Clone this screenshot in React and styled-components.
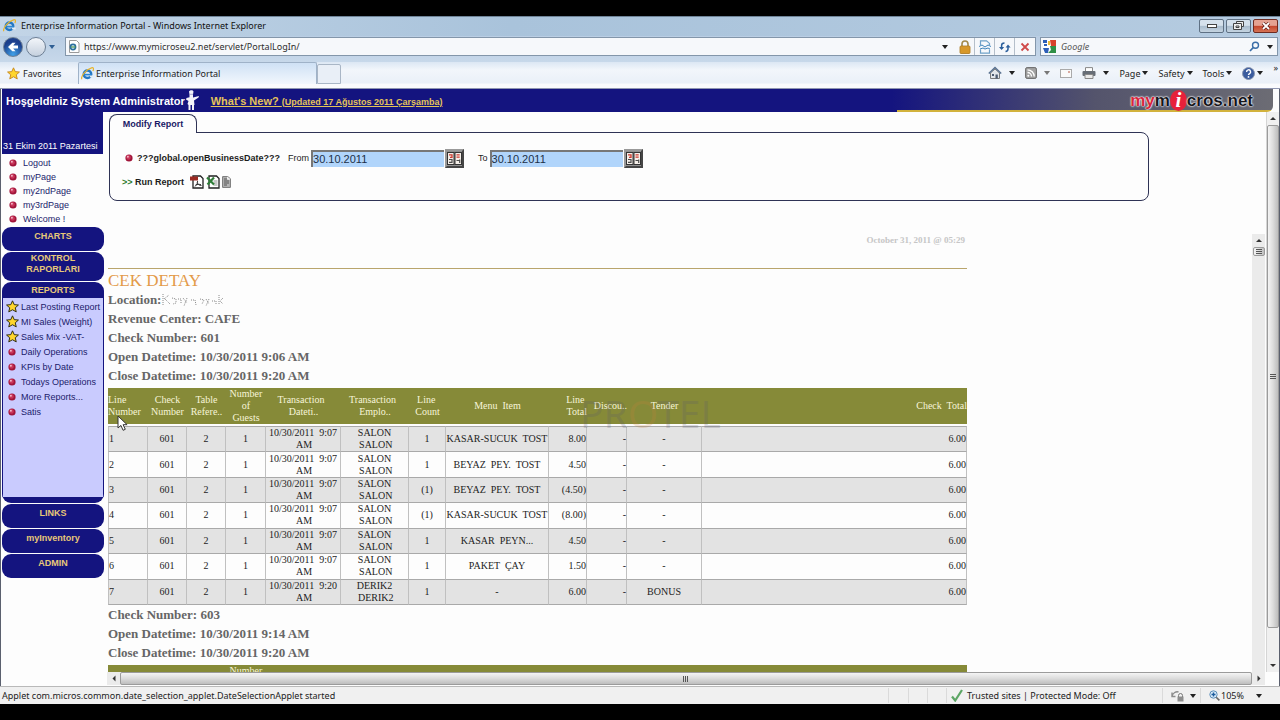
import React from 'react'
import styled, { createGlobalStyle, css } from 'styled-components'

const GlobalStyle = createGlobalStyle`
    *, *::before, *::after {
        box-sizing: border-box;
    }

    body {
        margin: 0;
        background: #000;
        font-family: "Noto Sans", "Open Sans", sans-serif;
        font-size: 9px;
        color: #1c1c1c;
    }

    button {
        padding: 0;
        border: 0;
        background: none;
        font: inherit;
        color: inherit;
    }

    a {
        color: inherit;
        text-decoration: none;
    }

    svg {
        display: block;
        flex: none;
    }
`;

const myPages = ['Logout', 'myPage', 'my2ndPage', 'my3rdPage', 'Welcome !']

const reports = [
    { name: 'Last Posting Report', starred: true },
    { name: 'MI Sales (Weight)', starred: true },
    { name: 'Sales Mix -VAT-', starred: true },
    { name: 'Daily Operations' },
    { name: 'KPIs by Date' },
    { name: 'Todays Operations' },
    { name: 'More Reports...' },
    { name: 'Satis' },
]

const columns = [
    { title: 'Line\nNumber', width: 40, align: 'left' },
    { title: 'Check\nNumber', width: 39 },
    { title: 'Table\nRefere..', width: 39 },
    { title: 'Number\nof\nGuests', width: 40 },
    { title: 'Transaction  \nDateti..', width: 75 },
    { title: 'Transaction  \nEmplo..', width: 68 },
    { title: 'Line \nCount', width: 37 },
    { title: 'Menu  Item', width: 103 },
    { title: 'Line \nTotal', width: 38, align: 'right' },
    { title: 'Discou..', width: 40, align: 'right' },
    { title: 'Tender', width: 75 },
    { title: 'Check  Total', width: 265, align: 'right' },
]

const rows = [
    ['1', '601', '2', '1', '10/30/2011  9:07\n AM', 'SALON\n SALON', '1', 'KASAR-SUCUK  TOST', '8.00', '-', '-', '6.00'],
    ['2', '601', '2', '1', '10/30/2011  9:07\n AM', 'SALON\n SALON', '1', 'BEYAZ  PEY.  TOST', '4.50', '-', '-', '6.00'],
    ['3', '601', '2', '1', '10/30/2011  9:07\n AM', 'SALON\n SALON', '(1)', 'BEYAZ  PEY.  TOST', '(4.50)', '-', '-', '6.00'],
    ['4', '601', '2', '1', '10/30/2011  9:07\n AM', 'SALON\n SALON', '(1)', 'KASAR-SUCUK  TOST', '(8.00)', '-', '-', '6.00'],
    ['5', '601', '2', '1', '10/30/2011  9:07\n AM', 'SALON\n SALON', '1', 'KASAR  PEYN...', '4.50', '-', '-', '6.00'],
    ['6', '601', '2', '1', '10/30/2011  9:07\n AM', 'SALON\n SALON', '1', 'PAKET  ÇAY', '1.50', '-', '-', '6.00'],
    ['7', '601', '2', '1', '10/30/2011  9:20\n AM', 'DERIK2\n DERIK2', '1', '-', '6.00', '-', 'BONUS', '6.00'],
]


/* ---------- icons ---------- */

const IeIcon = ({ size = 13 }) => (
    <svg width={size} height={size} viewBox="0 0 16 16" aria-hidden="true">
        <circle cx="8" cy="9" r="4.6" fill="none" stroke="#2277c4" strokeWidth="3" />
        <path d="M4 9.4h9" stroke="#2a86d4" strokeWidth="2" />
        <path d="M10.5 10.6h5v2.2h-4z" fill="#e3edf6" />
        <path d="M1 15C-.6 11.500 6 3 13 1c2.600-.6 3 1.200 1.600 4" fill="none" stroke="#e7b52e" strokeWidth="1.500" />
    </svg>
)

const Star = ({ size = 13, outline = '#2b2b10' }) => (
    <svg width={size} height={size} viewBox="0 0 16 16" aria-hidden="true">
        <path d="M8 1l2.100 4.700 5.200.5-3.900 3.400 1.200 5L8 12l-4.600 2.600 1.200-5L.7 6.200l5.200-.5z" fill="#ffd62e" stroke={outline} strokeWidth="1.200" strokeLinejoin="round" />
    </svg>
)

const Bullet = () => (
    <svg width="8" height="8" viewBox="0 0 8 8" aria-hidden="true">
        <circle cx="4" cy="4" r="3.600" fill="#a0153a" />
        <circle cx="3.500" cy="3.400" r="2.300" fill="#c9365a" />
        <circle cx="2.900" cy="2.700" r="1" fill="#f2b4c4" />
    </svg>
)

const BackArrow = () => (
    <svg width="14" height="14" viewBox="0 0 14 14" aria-hidden="true">
        <path d="M12 5.500v3H7.200l2.300 2.700H6.300L2 7l4.300-4.200h3.200L7.200 5.500z" fill="#fff" />
    </svg>
)

const PageIcon = () => (
    <svg width="12" height="13" viewBox="0 0 12 13" aria-hidden="true">
        <path d="M1.500.5h7l2.500 2.500v9.500h-9.500z" fill="#fff" stroke="#9a9a9a" />
        <circle cx="5" cy="7" r="2.600" fill="none" stroke="#2b6f9e" strokeWidth="1.600" />
        <path d="M3 7h4.600" stroke="#3a8a4a" strokeWidth="1.200" />
    </svg>
)

const LockIcon = () => (
    <svg width="12" height="14" viewBox="0 0 12 14" aria-hidden="true">
        <path d="M3 7V4a3 3 0 0 1 6 0v3" fill="none" stroke="#a38a4c" strokeWidth="1.600" />
        <rect x="1" y="6" width="10" height="7.500" rx="1" fill="#e0a030" stroke="#a8741a" strokeWidth=".8" />
        <path d="M2 8h8M2 10h8M2 12h8" stroke="#c58820" strokeWidth=".6" />
    </svg>
)

const CompatIcon = () => (
    <svg width="12" height="14" viewBox="0 0 12 14" aria-hidden="true">
        <path d="M1.500 5V.8h6l3 2.600V5M1.500 9.500v3.700h9V9.500" fill="none" stroke="#6ea0c8" strokeWidth="1.200" />
        <path d="M0 6.500l3-1.500 3 2 3-2 3 1.500M1 9l3-1 2 1 3-1 2 1" fill="none" stroke="#3d83bb" />
    </svg>
)

const RefreshIcon = () => (
    <svg width="12" height="12" viewBox="0 0 12 12" aria-hidden="true">
        <path d="M2.600 8V4.500C2.600 3 4 2 5.500 2" fill="none" stroke="#2c5f9c" strokeWidth="1.500" />
        <path d="M0 6h5.200L2.600 9zM6.600 6.500h5L9 3.500z" fill="#2c5f9c" />
        <path d="M9 5v3c0 1.500-1 2.300-2.500 2.500" fill="none" stroke="#2c5f9c" strokeWidth="1.500" />
    </svg>
)

const StopIcon = () => (
    <svg width="10" height="10" viewBox="0 0 10 10" aria-hidden="true">
        <path d="M1.500 1.500l7 7M8.500 1.500l-7 7" stroke="#cf4a4a" strokeWidth="1.800" />
    </svg>
)

const GoogleIcon = () => (
    <svg width="13" height="13" viewBox="0 0 13 13" aria-hidden="true">
        <path d="M0 0h13v13H0z" fill="#fff" />
        <path d="M0 0h4v3H0zM1 4h3v2H1z" fill="#2d5fb8" />
        <path d="M7 0h6v6H8z" fill="#d8402c" />
        <path d="M7 6h6v7H5l3-3z" fill="#2f8f46" />
        <path d="M0 8h6l-1 5H2z" fill="#2d5fb8" />
        <path d="M5 1h2v4H5z" fill="#e8b93a" />
    </svg>
)

const SearchIcon = () => (
    <svg width="11" height="11" viewBox="0 0 11 11" aria-hidden="true">
        <circle cx="6.500" cy="4.200" r="3" fill="none" stroke="#3a6ea8" strokeWidth="1.400" />
        <path d="M4.300 6.500L1 10" stroke="#3a6ea8" strokeWidth="1.800" />
    </svg>
)

const HomeIcon = () => (
    <svg width="14" height="14" viewBox="0 0 14 14" aria-hidden="true">
        <path d="M2.500 7v5.500h9V7L7 3z" fill="#e2e6ea" stroke="#7b7b7b" />
        <path d="M.8 7.500L7 1.500l6.200 6" fill="none" stroke="#5a7290" strokeWidth="1.600" />
        <path d="M4 8h2v2H4zM7.500 8.500h2.300v4H7.500z" fill="#4c5a70" />
    </svg>
)

const FeedIcon = () => (
    <svg width="12" height="12" viewBox="0 0 12 12" aria-hidden="true">
        <rect x=".6" y=".6" width="10.800" height="10.800" rx="1.500" fill="#a2a2a2" stroke="#6a6a6a" />
        <path d="M2.500 5.500a4 4 0 0 1 4 4M2.500 2.800a6.700 6.700 0 0 1 6.700 6.700" fill="none" stroke="#fff" strokeWidth="1.300" />
        <circle cx="3.300" cy="8.800" r="1" fill="#fff" />
    </svg>
)

const MailIcon = () => (
    <svg width="12" height="9" viewBox="0 0 12 9" aria-hidden="true">
        <rect x=".5" y=".5" width="11" height="8" fill="#fafafa" stroke="#aaa" />
        <path d="M8 2h2v2H8z" fill="#d9a9a0" />
    </svg>
)

const PrintIcon = () => (
    <svg width="14" height="12" viewBox="0 0 14 12" aria-hidden="true">
        <path d="M3.500 4V.6h7V4" fill="#fff" stroke="#888" />
        <rect x=".5" y="4" width="13" height="5" rx="1" fill="#666d76" />
        <path d="M3 7.500h8v4H3z" fill="#e9e9e9" stroke="#888" />
    </svg>
)

const HelpIcon = () => (
    <svg width="13" height="13" viewBox="0 0 13 13" aria-hidden="true">
        <circle cx="6.500" cy="6.500" r="6" fill="#3b5c9e" stroke="#8a97b0" />
        <path d="M4.600 5a2 2 0 1 1 2.900 1.600c-.7.400-1 .7-1 1.400" fill="none" stroke="#fff" strokeWidth="1.400" />
        <circle cx="6.500" cy="9.900" r=".9" fill="#fff" />
    </svg>
)

const ChefIcon = () => (
    <svg width="15" height="21" viewBox="0 0 15 21" aria-hidden="true">
        <path d="M4 1.500C5-.3 8-.3 8.500 1.500L8 4.500v3L14 6l-.5 1.500L9 10.500l.5 4.500H9v5H7v-5H5.500v5h-2v-5l-1-1 1-3L1 9.500 1.500 8l3-.8V4.500z" fill="#f4f4fa" />
        <path d="M4.500 4.300h3.600" stroke="#8a8ab8" strokeWidth=".7" />
    </svg>
)

const CalendarIcon = () => (
    <svg width="15" height="13" viewBox="0 0 15 13" aria-hidden="true">
        <rect x=".5" y=".5" width="6.500" height="12" fill="#f5efe9" stroke="#333" />
        <rect x="8" y=".5" width="6.500" height="12" fill="#f5efe9" stroke="#333" />
        <path d="M2 2.800h3v2.500H3M9.500 2.800h3.200M9.500 5.200h3.200" fill="none" stroke="#cc3a2f" strokeWidth="1.300" />
        <path d="M2 7.500h3v2.800H2M12.700 7.500v3.500M9.500 8.500h3" fill="none" stroke="#4c4c4c" strokeWidth="1.200" />
    </svg>
)

const PdfIcon = () => (
    <svg width="14" height="14" viewBox="0 0 14 14" aria-hidden="true">
        <path d="M3 1h7.500L13 3.500V13H3z" fill="#fff" stroke="#222" strokeWidth="1.300" />
        <path d="M0 1.500h8v4H0z" fill="#9c2a22" />
        <path d="M5 11.500c2-2 3-4 2.500-5.500M7 7.500c1 2 2.500 3 4.500 3M5.500 10c2-.8 4-.8 5.500-.3" fill="none" stroke="#333" />
    </svg>
)

const ExcelIcon = () => (
    <svg width="14" height="14" viewBox="0 0 14 14" aria-hidden="true">
        <path d="M3 1h7.500L13 3.500V13H3z" fill="#fff" stroke="#222" strokeWidth="1.300" />
        <path d="M7.500 6h4M8 8h3.500M7.500 10h4" stroke="#777" strokeWidth=".8" />
        <path d="M1 2.500l7 7M8 2.500l-6.500 7" stroke="#2f7d38" strokeWidth="2.200" />
    </svg>
)

const TextFileIcon = () => (
    <svg width="9" height="12" viewBox="0 0 9 12" aria-hidden="true">
        <path d="M.6.6h5.500l2.300 2.300v8.500H.6z" fill="#b4b4b4" stroke="#777" />
        <path d="M2 3h3M2 5h5M2 7h5M2 9h3" stroke="#555" />
        <path d="M5.500.8v2.400H8" fill="#eee" stroke="#eee" />
    </svg>
)

const CheckIcon = () => (
    <svg width="12" height="13" viewBox="0 0 12 13" aria-hidden="true">
        <path d="M1 7.500l3.200 4L11 1" fill="none" stroke="#5ca564" strokeWidth="2.200" />
    </svg>
)

const PrivacyIcon = () => (
    <svg width="13" height="12" viewBox="0 0 13 12" aria-hidden="true">
        <path d="M1 6c1-3 4-5 6.500-4M1 2.500V6.500h3.500" fill="none" stroke="#8c8c8c" strokeWidth="1.400" />
        <path d="M7.500 7V5.500a2 2 0 0 1 4 0V7" fill="none" stroke="#777" />
        <rect x="6.500" y="6.500" width="6" height="5" fill="#8d8d8d" />
    </svg>
)

const ZoomIcon = () => (
    <svg width="11" height="11" viewBox="0 0 11 11" aria-hidden="true">
        <circle cx="4.500" cy="4.500" r="3.700" fill="#d9ebfa" stroke="#5b8db8" />
        <path d="M4.500 2.500v4M2.500 4.500h4" stroke="#1d5c9c" strokeWidth="1.400" />
        <path d="M7.200 7.200l3.200 3.200" stroke="#666" strokeWidth="1.600" />
    </svg>
)

const Cursor = () => (
    <svg width="12" height="17" viewBox="0 0 12 17" aria-hidden="true">
        <path d="M1 1v12l2.900-2.600 2.200 4.900 2.200-1-2.200-4.600h4z" fill="#fff" stroke="#333" />
    </svg>
)

const MaskedName = () => (
    <svg width="64" height="14" viewBox="0 0 64 14" aria-hidden="true">
        <path d="M2 1v12M3 6l5-4M4 6l5 5M11 5l4 1v4l-3 1M17 6h3v5M22 5l4 5M26 5l-3 8M30 7h4l1 5M39 6l4 1-2 4M45 6l3 5M48 6l-3 7M51 8h4v3M58 2v9M62 5l-3 3 3 3" fill="none" stroke="#888" strokeDasharray="1 1" />
    </svg>
)


/* ---------- browser window ---------- */

const Window = styled.div`
    display: flex;
    flex-direction: column;
    height: 100vh;
    padding: 16px 0;
    overflow: hidden;
`;

const TitleBar = styled.header`
    display: flex;
    align-items: center;
    gap: 5px;
    height: 20px;
    flex: none;
    padding: 0 2px 2px 3px;
    background: linear-gradient(90deg, #c3d5e7, #a9c3db 40%, #b5cbe0);
    border-top: 1px solid #6f8498;
`;

const Title = styled.h1`
    flex: 1;
    margin: 0;
    font-size: 9px;
    font-weight: 400;
    color: #111;
`;

const WindowButtons = styled.div`
    display: flex;
    gap: 2px;
`;

const WindowButton = styled.button`
    display: grid;
    place-items: center;
    width: 25px;
    height: 14px;
    border: 1px solid #5f7184;
    border-radius: 2px;
    background: linear-gradient(#d5e1ec 45%, #a9bccd 50%, #c5d4e1);

    ${({ $close }) => $close && css`
        border-color: #6e2a20;
        background: linear-gradient(#e5a292 45%, #c4452c 50%, #d67355);
    `}
`;

const AddressRow = styled.div`
    display: flex;
    align-items: flex-start;
    height: 26px;
    flex: none;
    padding: 1px 2px 0 3px;
    background: linear-gradient(#b9cde3, #c7d8ea);
`;

const NavButtons = styled.div`
    display: flex;
    align-items: center;
    gap: 3px;
    width: 62px;
    height: 20px;
`;

const RoundButton = styled.button`
    display: grid;
    place-items: center;
    width: 20px;
    height: 20px;
    border: 1px solid #6d7f94;
    border-radius: 50%;
    background: ${({ $active }) => $active
        ? 'radial-gradient(circle at 50% 90%, #3fa0e8, #1c3f8c 65%)'
        : 'linear-gradient(#f3f6fa, #c5d0de)'};
`;

const Arrow = styled.span`
    width: 0;
    height: 0;
    flex: none;
    border: 3px solid transparent;
    border-bottom-width: 0;
    border-top: 4px solid ${({ $color }) => $color || '#222'};
`;

const Field = styled.div`
    display: flex;
    align-items: center;
    height: 19px;
    border: 1px solid #8396aa;
    background: #f6f8fb;
`;

const AddressField = styled(Field)`
    flex: 1;
    gap: 4px;
    padding-left: 2px;
`;

const SearchField = styled(Field)`
    width: 238px;
    gap: 5px;
    margin-left: 4px;
    padding: 0 4px 0 2px;
`;

const FieldInput = styled.input`
    flex: 1;
    min-width: 0;
    padding: 0;
    border: 0;
    outline: 0;
    background: none;
    font: inherit;
    font-style: ${({ $hint }) => $hint ? 'italic' : 'normal'};
    color: #2e2e2e;

    &::placeholder {
        color: #555;
        opacity: 1;
    }
`;

const FieldButtons = styled.div`
    display: flex;
    align-self: stretch;

    button {
        display: grid;
        place-items: center;
        width: 20px;
        border-right: 1px solid #b5bfca;
    }

    button:first-child {
        border-right: 0;
    }

    button:last-child {
        border-right: 0;
    }
`;

const CommandRow = styled.div`
    display: flex;
    align-items: flex-end;
    height: 27px;
    flex: none;
    padding: 0 2px 4px 7px;
    background: linear-gradient(#dce7f4, #f2f6fb 30%, #eaf0f8 80%, #fafbfd 86%);
    border-bottom: 1px solid #8f96b0;
`;

const Favorites = styled.button`
    display: flex;
    align-items: center;
    gap: 3px;
    width: 71px;
    height: 21px;
`;

const Tab = styled.button`
    display: flex;
    align-items: center;
    gap: 2px;
    width: 239px;
    height: 22px;
    padding: 0 2px;
    border: 1px solid #9fb2c8;
    border-bottom: 0;
    border-radius: 2px 2px 0 0;
    background: linear-gradient(#cfe1f5, #f2f7fd);
`;

const NewTab = styled.button`
    width: 24px;
    height: 20px;
    border: 1px solid #a9b6c6;
    border-radius: 2px 2px 0 0;
    background: #e9eff7;
`;

const Commands = styled.nav`
    display: flex;
    flex: 1;
    justify-content: flex-end;
    align-items: center;
    gap: 10px;
    height: 22px;
`;

const Command = styled.button`
    display: flex;
    align-items: center;
    gap: ${({ $wide }) => $wide ? 7 : 2}px;
`;

const More = styled.button`
    align-self: flex-start;
    line-height: 12px;
`;


/* ---------- portal ---------- */

const Portal = styled.div`
    display: flex;
    flex-direction: column;
    flex: 1;
    min-height: 0;
    border: solid #5b606e;
    border-width: 0 1px;
    background: #fdfdfd;
    font-family: "Liberation Sans", Arial, sans-serif;
`;

const Banner = styled.div`
    display: flex;
    align-items: center;
    height: 23px;
    flex: none;
    margin: 0 6px 0 1px;
    padding: 0 20px 0 4px;
    border-bottom-right-radius: 6px;
    background:
        linear-gradient(#d2b23c, #d2b23c) right bottom / 376px 2px no-repeat,
        linear-gradient(90deg, #14147f 0, #14147f 70%, #54546c 86%, #6c6c74);
    color: #fff;
`;

const Greeting = styled.strong`
    font-size: 11px;
`;

const WhatsNew = styled.a`
    flex: 1;
    margin-left: 11px;
    font-size: 11px;
    font-weight: 700;
    color: #e5c35a;
    text-decoration: underline;

    small {
        font-size: 9px;
    }
`;

const Logo = styled.div`
    display: flex;
    align-items: center;
    font-size: 17px;
    line-height: 22px;
    font-weight: 700;
    color: #16161c;
    text-shadow: 0 0 2px #fff, 0 0 2px #fff, 0 0 1px #fff;

    em {
        font-style: normal;
        color: #d8263c;
    }

    i {
        width: 17px;
        height: 21px;
        flex: none;
        border-radius: 50%;
        background: radial-gradient(#e8203a 55%, #c03848);
        font-family: "Liberation Serif", serif;
        font-size: 21px;
        line-height: 20px;
        text-align: center;
        color: #fff;
        text-shadow: none;
    }
`;

const Body = styled.div`
    display: flex;
    flex: 1;
    min-height: 0;
`;

const Sidebar = styled.aside`
    width: 103px;
    flex: none;
    padding-left: 1px;
    font-size: 9px;
    color: #1b1b6b;
`;

const Today = styled.div`
    display: flex;
    align-items: flex-end;
    height: 42px;
    margin-right: 1px;
    padding: 0 0 1px 1px;
    background: #14147f;
    color: #fff;
    line-height: 14px;
    white-space: nowrap;
`;

const MenuList = styled.ul`
    margin: 0;
    padding: 2px 0 1px 7px;
    list-style: none;
`;

const ReportList = styled.ul`
    height: 199px;
    margin: 0;
    padding: 1px 0 0 3px;
    border-left: 1px solid #14147f;
    border-right: 1px solid #14147f;
    background: #c9cbfe;
    list-style: none;
`;

const MenuItem = styled.li`
    display: grid;
    grid-template-columns: 14px 1fr;
    align-items: center;
    height: 14px;
    white-space: nowrap;
`;

const ReportItem = styled(MenuItem)`
    grid-template-columns: 12px 1fr;
    justify-items: center;
    column-gap: 3px;
    height: 15px;

    a {
        justify-self: start;
    }
`;

const Section = styled.section`
    margin-bottom: 1px;
    border-radius: 9px;
    background: #14147f;
    overflow: hidden;
    padding-bottom: ${({ $open }) => $open ? 6 : 0}px;
`;

const sectionPadding = {
    closed: '4px 20px 9px',
    tall: '1px 20px 6px',
    open: '3px 20px 2px',
}

const SectionButton = styled.button`
    display: block;
    width: 100%;
    padding: ${({ $kind }) => sectionPadding[$kind || 'closed']};
    font-weight: 700;
    line-height: 11px;
    color: #e8c878;
`;

const Main = styled.main`
    display: flex;
    flex-direction: column;
    flex: 1;
    min-width: 0;
    padding: 2px 1px 0 5px;
`;

const ReportTab = styled.h2`
    width: 88px;
    height: 19px;
    flex: none;
    margin: 0 0 -1px;
    border: 1px solid #2f3355;
    border-bottom: 0;
    border-radius: 8px 8px 0 0;
    background: #fdfdfd;
    font-size: 9px;
    line-height: 18px;
    text-align: center;
    color: #1a1a66;
    z-index: 1;
`;

const Panel = styled.form`
    display: flex;
    flex-direction: column;
    gap: 4px;
    flex: none;
    margin-right: 116px;
    padding: 15px 12px 8px;
    border: 1px solid #2f3355;
    border-radius: 0 8px 8px 8px;
`;

const PanelRow = styled.div`
    display: flex;
    align-items: center;
    height: 20px;
`;

const Caption = styled.strong`
    margin: 0 8px 0 4px;
`;

const PanelBullet = styled.span`
    margin-left: 3px;
`;

const DateInput = styled.input`
    width: 133px;
    height: 17px;
    margin-left: 2px;
    padding: 0;
    border: solid #777;
    border-width: 2px 0 0 2px;
    border-radius: 0;
    background: #b1d5fb;
    font: 11px "Liberation Sans", Arial, sans-serif;
    color: #1c3048;
`;

const CalendarButton = styled.button`
    display: grid;
    place-items: center;
    width: 19px;
    height: 19px;
    margin: 0 14px 0 1px;
    border: 2px outset #999;
    background: #8f8f8f;
`;

const RunButton = styled.button`
    margin-right: 6px;
    font-weight: 700;

    span {
        color: #2c7a2c;
    }
`;

const ExportButton = styled.button`
    margin-right: 2px;
`;

const ReportFrame = styled.div`
    display: grid;
    grid-template-columns: 1fr 13px;
    grid-template-rows: 1fr 13px;
    flex: 1;
    min-height: 0;
    margin: 33px 0 1px -2px;
`;

const Report = styled.article`
    position: relative;
    padding-left: 1px;
    overflow: hidden;
    font-family: "Liberation Serif", "Times New Roman", serif;
`;

const Sheet = styled.div`
    width: 859px;
`;

const Printed = styled.p`
    margin: 0;
    padding: 0 2px 22px 0;
    border-bottom: 1px solid #b9a56c;
    font-size: 9px;
    font-weight: 700;
    line-height: 12px;
    text-align: right;
    color: #c6c6c6;
`;

const ReportTitle = styled.h2`
    margin: 2px 0 0;
    font-size: 17px;
    font-weight: 400;
    line-height: 19px;
    color: #e39a49;
`;

const Fact = styled.p`
    display: flex;
    align-items: center;
    margin: 0;
    font-size: 13px;
    font-weight: 700;
    line-height: 19px;
    color: #666;
`;

const Table = styled.table`
    width: 100%;
    height: ${({ $headOnly }) => $headOnly ? 38 : 217}px;
    margin-top: 3px;
    border-spacing: 0;
    table-layout: fixed;
    font-size: 10px;
    line-height: 12px;
`;

const Head = styled.th`
    width: ${({ $width }) => $width}px;
    height: 38px;
    padding: 0;
    border-bottom: 2px solid #fdfdfd;
    background: #868a38;
    font-weight: 400;
    text-align: ${({ $align }) => $align || 'center'};
    white-space: pre;
    color: #f7f5d8;
`;

const Cell = styled.td`
    padding: 0;
    border-top: 1px solid #a9a9a9;
    border-right: 1px solid #c0c0c0;
    text-align: ${({ $align }) => $align || 'center'};
    white-space: pre;

    &:first-child {
        border-left: 1px solid #c0c0c0;
    }
`;

const Row = styled.tr`
    &:nth-child(odd) {
        background: #e3e3e3;
    }

    &:last-child td {
        border-bottom: 1px solid #a9a9a9;
    }
`;

const Watermark = styled.div`
    position: absolute;
    left: 473px;
    top: 154px;
    font-family: "Noto Sans", sans-serif;
    font-size: 39px;
    line-height: 50px;
    color: rgba(90, 90, 110, .22);
    pointer-events: none;

    span {
        color: rgba(200, 130, 60, .22);
    }
`;

const Pointer = styled.div`
    position: absolute;
    left: 10px;
    top: 181px;
`;


/* ---------- scrollbars ---------- */

const VScroll = styled.div`
    display: flex;
    flex-direction: column;
    align-items: center;
    background: #ebebeb;
`;

const HScroll = styled.div`
    display: flex;
    align-items: center;
    grid-column: 1 / -1;
    background: #ebebeb;
`;

const PageScroll = styled(VScroll)`
    width: 13px;
    flex: none;
    margin-bottom: 14px;
    border-left: 1px solid #d5d5d5;
    background: #f0f0f0;
`;

const ScrollButton = styled.button`
    display: grid;
    place-items: center;
    width: 13px;
    height: 13px;
    flex: none;

    &::before {
        content: '';
        border: 3px solid transparent;
        border-bottom: 3px solid #333;
        border-top: 0;
        transform: rotate(${({ $turn }) => $turn || 0}deg);
    }
`;

const Thumb = styled.div`
    display: grid;
    place-items: center;
    border: 1px solid #9b9b9b;
    border-radius: 2px;
    background: linear-gradient(${({ $flat }) => $flat ? '180deg' : '90deg'}, #f4f4f4, #dcdcdc 50%, #bdbdbd);

    &::before {
        content: '';
        width: 6px;
        height: 6px;
        background: repeating-linear-gradient(${({ $flat }) => $flat ? '90deg' : '180deg'}, #555 0 1px, transparent 1px 2px);
    }
`;

const PageThumb = styled(Thumb)`
    align-self: stretch;
    flex: 1;
    margin-bottom: 31px;
`;

const SmallThumb = styled(Thumb)`
    width: 12px;
    height: 9px;
`;

const WideThumb = styled(Thumb)`
    flex: 1;
    height: 13px;
`;


/* ---------- status bar ---------- */

const StatusBar = styled.footer`
    display: flex;
    align-items: center;
    height: 18px;
    flex: none;
    padding-left: 2px;
    background: #f0f0f0;
    border-top: 1px solid #b9b9b9;
`;

const StatusText = styled.span`
    flex: 1;
`;

const StatusCell = styled.div`
    display: flex;
    align-items: center;
    gap: 4px;
    width: ${({ $width }) => $width}px;
    height: 15px;
    padding-left: 4px;
    border-left: 1px solid #dadada;
`;

const StatusButton = styled.button`
    display: flex;
    align-items: center;
    gap: ${({ $gap }) => $gap}px;
    height: 15px;
    padding: 0 ${({ $end }) => $end || 4}px 0 8px;
    border-left: 1px solid #dadada;
`;

const ZoomText = styled.span`
    margin-right: 11px;
`;


function TableHead() {
    return (
        <thead>
            <tr>
                {columns.map(col => (
                    <Head key={col.title} $width={col.width} $align={col.align}>{col.title}</Head>
                ))}
            </tr>
        </thead>
    )
}

function Browser() {
    return (
        <>
            <TitleBar>
                <IeIcon />
                <Title>Enterprise Information Portal - Windows Internet Explorer</Title>
                <WindowButtons>
                    <WindowButton aria-label="Minimize">
                        <svg width="10" height="6"><rect x=".5" y="1.500" width="9" height="3" fill="#fff" stroke="#444" /></svg>
                    </WindowButton>
                    <WindowButton aria-label="Restore">
                        <svg width="11" height="9"><path d="M3.500 2.500v-2h7v5h-2M.5 2.500h8v6h-8zM3 5h3v1.500H3z" fill="#eee" stroke="#444" /></svg>
                    </WindowButton>
                    <WindowButton aria-label="Close" $close>
                        <svg width="10" height="8"><path d="M2 1l6 6M8 1L2 7" stroke="#5a1a14" strokeWidth="3.200" /><path d="M2 1l6 6M8 1L2 7" stroke="#fff" strokeWidth="1.800" /></svg>
                    </WindowButton>
                </WindowButtons>
            </TitleBar>
            <AddressRow>
                <NavButtons>
                    <RoundButton aria-label="Back" $active><BackArrow /></RoundButton>
                    <RoundButton aria-label="Forward" />
                    <Command aria-label="Recent pages"><Arrow $color="#2f5f94" /></Command>
                </NavButtons>
                <AddressField>
                    <PageIcon />
                    <FieldInput aria-label="Address" defaultValue="https://www.mymicroseu2.net/servlet/PortalLogIn/" />
                    <FieldButtons>
                        <button aria-label="Show addresses"><Arrow /></button>
                        <button aria-label="Security report"><LockIcon /></button>
                        <button aria-label="Compatibility view"><CompatIcon /></button>
                        <button aria-label="Refresh"><RefreshIcon /></button>
                        <button aria-label="Stop"><StopIcon /></button>
                    </FieldButtons>
                </AddressField>
                <SearchField>
                    <GoogleIcon />
                    <FieldInput aria-label="Search" placeholder="Google" $hint />
                    <Command aria-label="Search" $wide><SearchIcon /><Arrow /></Command>
                </SearchField>
            </AddressRow>
            <CommandRow>
                <Favorites><Star outline="#c98a1c" />Favorites</Favorites>
                <Tab><IeIcon />Enterprise Information Portal</Tab>
                <NewTab aria-label="New tab" />
                <Commands>
                    <Command aria-label="Home" $wide><HomeIcon /><Arrow /></Command>
                    <Command aria-label="Feeds" $wide><FeedIcon /><Arrow $color="#777" /></Command>
                    <Command aria-label="Mail"><MailIcon /></Command>
                    <Command aria-label="Print" $wide><PrintIcon /><Arrow /></Command>
                    <Command>Page<Arrow /></Command>
                    <Command>Safety<Arrow /></Command>
                    <Command>Tools<Arrow /></Command>
                    <Command aria-label="Help"><HelpIcon /><Arrow /></Command>
                    <More aria-label="More commands">»</More>
                </Commands>
            </CommandRow>
        </>
    )
}

function SideMenu() {
    return (
        <Sidebar>
            <Today>31 Ekim 2011 Pazartesi</Today>
            <MenuList>
                {myPages.map(page => (
                    <MenuItem key={page}><Bullet /><a href="#page">{page}</a></MenuItem>
                ))}
            </MenuList>
            <Section><SectionButton>CHARTS</SectionButton></Section>
            <Section><SectionButton $kind="tall">KONTROL RAPORLARI</SectionButton></Section>
            <Section $open>
                <SectionButton $kind="open">REPORTS</SectionButton>
                <ReportList>
                    {reports.map(report => (
                        <ReportItem key={report.name}>
                            {report.starred ? <Star /> : <Bullet />}
                            <a href="#report">{report.name}</a>
                        </ReportItem>
                    ))}
                </ReportList>
            </Section>
            <Section><SectionButton>LINKS</SectionButton></Section>
            <Section><SectionButton>myInventory</SectionButton></Section>
            <Section><SectionButton>ADMIN</SectionButton></Section>
        </Sidebar>
    )
}

function ReportView() {
    return (
        <ReportFrame>
            <Report>
                <Sheet>
                    <Printed>October 31, 2011 @ 05:29</Printed>
                    <ReportTitle>CEK DETAY</ReportTitle>
                    <Fact>Location: <MaskedName /></Fact>
                    <Fact>Revenue Center: CAFE</Fact>
                    <Fact>Check Number: 601</Fact>
                    <Fact>Open Datetime: 10/30/2011 9:06 AM</Fact>
                    <Fact>Close Datetime: 10/30/2011 9:20 AM</Fact>
                    <Table>
                        <TableHead />
                        <tbody>
                            {rows.map(row => (
                                <Row key={row[0]}>
                                    {row.map((value, i) => (
                                        <Cell key={i} $align={columns[i].align}>{value}</Cell>
                                    ))}
                                </Row>
                            ))}
                        </tbody>
                    </Table>
                    <Fact>Check Number: 603</Fact>
                    <Fact>Open Datetime: 10/30/2011 9:14 AM</Fact>
                    <Fact>Close Datetime: 10/30/2011 9:20 AM</Fact>
                    <Table $headOnly>
                        <TableHead />
                    </Table>
                </Sheet>
                <Watermark>PR<span>O</span>TEL</Watermark>
                <Pointer><Cursor /></Pointer>
            </Report>
            <VScroll>
                <ScrollButton aria-label="Scroll up" />
                <SmallThumb />
            </VScroll>
            <HScroll>
                <ScrollButton aria-label="Scroll left" $turn={-90} />
                <WideThumb $flat />
                <ScrollButton aria-label="Scroll right" $turn={90} />
            </HScroll>
        </ReportFrame>
    )
}

export default function App() {
    return (
        <Window>
            <GlobalStyle />
            <Browser />
            <Portal>
                <Banner>
                    <Greeting>Hoşgeldiniz System Administrator</Greeting>
                    <ChefIcon />
                    <WhatsNew href="#news">What's New? <small>(Updated 17 Ağustos 2011 Çarşamba)</small></WhatsNew>
                    <Logo><em>my</em>m<i>i</i>cros.net</Logo>
                </Banner>
                <Body>
                    <SideMenu />
                    <Main>
                        <ReportTab>Modify Report</ReportTab>
                        <Panel onSubmit={e => e.preventDefault()}>
                            <PanelRow>
                                <PanelBullet><Bullet /></PanelBullet>
                                <Caption>???global.openBusinessDate???</Caption>
                                <label htmlFor="from">From</label>
                                <DateInput id="from" defaultValue="30.10.2011" />
                                <CalendarButton type="button" aria-label="Pick start date"><CalendarIcon /></CalendarButton>
                                <label htmlFor="to">To</label>
                                <DateInput id="to" defaultValue="30.10.2011" />
                                <CalendarButton type="button" aria-label="Pick end date"><CalendarIcon /></CalendarButton>
                            </PanelRow>
                            <PanelRow>
                                <RunButton><span>&gt;&gt;</span> Run Report</RunButton>
                                <ExportButton type="button" aria-label="Export PDF"><PdfIcon /></ExportButton>
                                <ExportButton type="button" aria-label="Export Excel"><ExcelIcon /></ExportButton>
                                <ExportButton type="button" aria-label="Export text"><TextFileIcon /></ExportButton>
                            </PanelRow>
                        </Panel>
                        <ReportView />
                    </Main>
                    <PageScroll>
                        <ScrollButton aria-label="Page up" />
                        <PageThumb />
                        <ScrollButton aria-label="Page down" $turn={180} />
                    </PageScroll>
                </Body>
            </Portal>
            <StatusBar>
                <StatusText>Applet com.micros.common.date_selection_applet.DateSelectionApplet started</StatusText>
                <StatusCell $width={20} />
                <StatusCell $width={19} />
                <StatusCell $width={19} />
                <StatusCell $width={216}><CheckIcon />Trusted sites | Protected Mode: Off</StatusCell>
                <StatusButton $gap={6} aria-label="Privacy"><PrivacyIcon /><Arrow /></StatusButton>
                <StatusButton $gap={1} $end={18}><ZoomIcon /><ZoomText>105%</ZoomText><Arrow /></StatusButton>
            </StatusBar>
        </Window>
    )
}
